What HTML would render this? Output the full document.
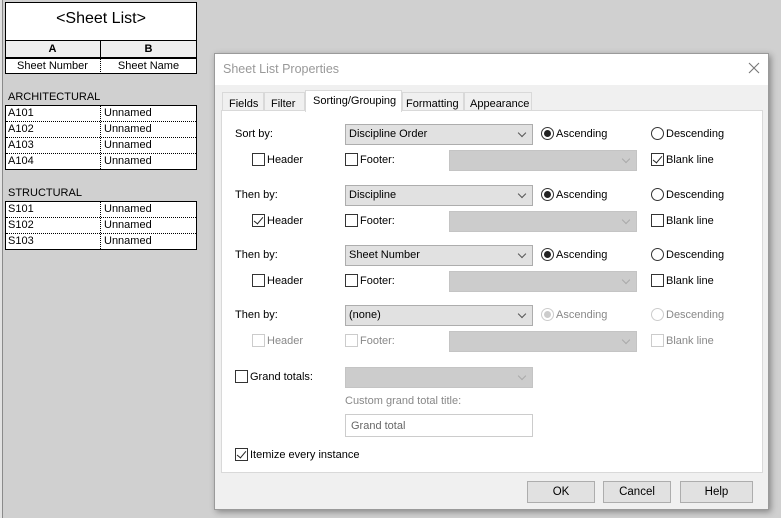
<!DOCTYPE html>
<html><head><style>
*{margin:0;padding:0;box-sizing:border-box}
body{width:781px;height:518px;background:#d0d0d0;position:relative;overflow:hidden;font-family:"Liberation Sans",sans-serif;font-size:12px;color:#000}
.a{position:absolute;white-space:nowrap}
.lb{position:absolute;left:0;top:0;width:3px;height:518px;background:#e2e2e2;border-right:1px solid #8a8a8a}
.tb{position:absolute;background:#fff;border:1px solid #000}
.cell{position:absolute;font-size:11px;line-height:15px}
.dlg{position:absolute;left:214px;top:53px;width:555px;height:457px;background:#f0f0f0;border:1px solid #9a9a9a;box-shadow:2px 2px 6px rgba(0,0,0,.35)}
.t{font-family:"Liberation Sans",sans-serif;font-size:11px;line-height:16px}
.sel{position:absolute;height:21px;background:#e1e1e1;border:1px solid #adadad;font-size:11px;line-height:19px;padding-left:3px}
.sel.d{background:#cccccc;border-color:#c4c4c4}
.sel:after{content:"";position:absolute;right:7px;top:5px;width:5px;height:5px;border-right:1px solid #555;border-bottom:1px solid #555;transform:rotate(45deg)}
.sel.d:after{border-color:#aaa}
.cb{position:absolute;width:13px;height:13px;border:1px solid #333;background:#fff}
.cb.dis{border-color:#ccc}
.cb.k:after{content:"";position:absolute;left:3px;top:0px;width:4px;height:8px;border-right:1.3px solid #222;border-bottom:1.3px solid #222;transform:rotate(40deg)}
.rd{position:absolute;width:13px;height:13px;border:1px solid #333;border-radius:50%;background:#fff}
.rd.on:after{content:"";position:absolute;left:2px;top:2px;width:7px;height:7px;border-radius:50%;background:#222}
.rd.dis{border-color:#ccc}
.rd.dis.on:after{background:#ccc}
.g{color:#888}
.btn{position:absolute;top:427px;height:22px;background:#e1e1e1;border:1px solid #adadad;text-align:center;line-height:20px;font-size:11.5px}
.tab{line-height:14px}
</style></head><body>
<div class="lb"></div>
<div class="tb" style="left:5px;top:2px;width:192px;height:39px;border-width:1px 1px 1px 1px"></div>
<div class="a" style="left:5px;top:10px;width:192px;text-align:center;font-size:16px">&lt;Sheet List&gt;</div>
<div class="a" style="left:5px;top:41px;width:192px;height:17px;background:#efefef;border:1px solid #000;border-top:none"></div>
<div class="a" style="left:100px;top:41px;width:1px;height:17px;background:#000"></div>
<div class="cell a" style="left:5px;top:42px;width:95px;text-align:center;font-weight:bold">A</div>
<div class="cell a" style="left:101px;top:42px;width:95px;text-align:center;font-weight:bold">B</div>
<div class="tb" style="left:5px;top:57px;width:192px;height:17px;border-width:2px 1px 1px 1px"></div>
<div class="a" style="left:100px;top:58px;height:16px;border-left:1px dotted #000"></div>
<div class="cell a" style="left:5px;top:59px;width:95px;text-align:center">Sheet Number</div>
<div class="cell a" style="left:101px;top:59px;width:95px;text-align:center">Sheet Name</div>
<div class="cell a" style="left:8px;top:90px">ARCHITECTURAL</div>
<div class="tb" style="left:5px;top:105px;width:192px;height:65px;border-width:1px"></div>
<div class="a" style="left:100px;top:106px;height:63px;border-left:1px dotted #000"></div>
<div class="a" style="left:6px;top:121px;width:190px;border-top:1px dotted #000"></div>
<div class="a" style="left:6px;top:137px;width:190px;border-top:1px dotted #000"></div>
<div class="a" style="left:6px;top:153px;width:190px;border-top:1px dotted #000"></div>
<div class="cell a" style="left:8px;top:106px">A101</div><div class="cell a" style="left:104px;top:106px">Unnamed</div>
<div class="cell a" style="left:8px;top:122px">A102</div><div class="cell a" style="left:104px;top:122px">Unnamed</div>
<div class="cell a" style="left:8px;top:138px">A103</div><div class="cell a" style="left:104px;top:138px">Unnamed</div>
<div class="cell a" style="left:8px;top:154px">A104</div><div class="cell a" style="left:104px;top:154px">Unnamed</div>
<div class="cell a" style="left:8px;top:186px">STRUCTURAL</div>
<div class="tb" style="left:5px;top:201px;width:192px;height:49px"></div>
<div class="a" style="left:100px;top:202px;height:47px;border-left:1px dotted #000"></div>
<div class="a" style="left:6px;top:217px;width:190px;border-top:1px dotted #000"></div>
<div class="a" style="left:6px;top:233px;width:190px;border-top:1px dotted #000"></div>
<div class="cell a" style="left:8px;top:202px">S101</div><div class="cell a" style="left:104px;top:202px">Unnamed</div>
<div class="cell a" style="left:8px;top:218px">S102</div><div class="cell a" style="left:104px;top:218px">Unnamed</div>
<div class="cell a" style="left:8px;top:234px">S103</div><div class="cell a" style="left:104px;top:234px">Unnamed</div>

<div class="dlg t">
 <div class="a" style="left:0;top:0;width:553px;height:31px;background:#fff"></div>
 <div class="a" style="left:8px;top:7px;font-size:12.5px;color:#999">Sheet List Properties</div>
 <svg class="a" style="left:533px;top:8px" width="12" height="12" viewBox="0 0 12 12"><path d="M1 1L11 11M11 1L1 11" stroke="#777" stroke-width="1.1"/></svg>
 <!-- tabs -->
 <div class="a" style="left:6px;top:56px;width:542px;height:363px;background:#fff;border:1px solid #d9d9d9"></div>
 <div class="a tab" style="left:7px;top:38px;width:42px;height:19px;background:#f0f0f0;border:1px solid #d9d9d9;padding:4px 0 0 6px">Fields</div>
 <div class="a tab" style="left:49px;top:38px;width:41px;height:19px;background:#f0f0f0;border:1px solid #d9d9d9;padding:4px 0 0 6px">Filter</div>
 <div class="a tab" style="left:90px;top:36px;width:97px;height:22px;background:#fff;border:1px solid #d9d9d9;border-bottom:none;padding:3px 0 0 7px">Sorting/Grouping</div>
 <div class="a tab" style="left:187px;top:38px;width:62px;height:19px;background:#f0f0f0;border:1px solid #d9d9d9;padding:4px 0 0 3px">Formatting</div>
 <div class="a tab" style="left:249px;top:38px;width:68px;height:19px;background:#f0f0f0;border:1px solid #d9d9d9;padding:4px 0 0 5px">Appearance</div>

 <div class="a" style="left:20px;top:72px">Sort by:</div>
 <div class="sel" style="left:130px;top:70px;width:188px">Discipline Order</div>
 <div class="rd on" style="left:326px;top:73px"></div><div class="a" style="left:341px;top:72px">Ascending</div>
 <div class="rd" style="left:436px;top:73px"></div><div class="a" style="left:451px;top:72px">Descending</div>
 <div class="cb" style="left:37px;top:99px"></div><div class="a" style="left:52px;top:98px">Header</div>
 <div class="cb" style="left:130px;top:99px"></div><div class="a" style="left:145px;top:98px">Footer:</div>
 <div class="sel d" style="left:234px;top:96px;width:188px"></div>
 <div class="cb k" style="left:436px;top:99px"></div><div class="a" style="left:451px;top:98px">Blank line</div>

 <div class="a" style="left:20px;top:133px">Then by:</div>
 <div class="sel" style="left:130px;top:131px;width:188px">Discipline</div>
 <div class="rd on" style="left:326px;top:134px"></div><div class="a" style="left:341px;top:133px">Ascending</div>
 <div class="rd" style="left:436px;top:134px"></div><div class="a" style="left:451px;top:133px">Descending</div>
 <div class="cb k" style="left:37px;top:160px"></div><div class="a" style="left:52px;top:159px">Header</div>
 <div class="cb" style="left:130px;top:160px"></div><div class="a" style="left:145px;top:159px">Footer:</div>
 <div class="sel d" style="left:234px;top:157px;width:188px"></div>
 <div class="cb" style="left:436px;top:160px"></div><div class="a" style="left:451px;top:159px">Blank line</div>

 <div class="a" style="left:20px;top:193px">Then by:</div>
 <div class="sel" style="left:130px;top:191px;width:188px">Sheet Number</div>
 <div class="rd on" style="left:326px;top:194px"></div><div class="a" style="left:341px;top:193px">Ascending</div>
 <div class="rd" style="left:436px;top:194px"></div><div class="a" style="left:451px;top:193px">Descending</div>
 <div class="cb" style="left:37px;top:220px"></div><div class="a" style="left:52px;top:219px">Header</div>
 <div class="cb" style="left:130px;top:220px"></div><div class="a" style="left:145px;top:219px">Footer:</div>
 <div class="sel d" style="left:234px;top:217px;width:188px"></div>
 <div class="cb" style="left:436px;top:220px"></div><div class="a" style="left:451px;top:219px">Blank line</div>

 <div class="a" style="left:20px;top:253px">Then by:</div>
 <div class="sel" style="left:130px;top:251px;width:188px">(none)</div>
 <div class="rd on dis" style="left:326px;top:254px"></div><div class="a g" style="left:341px;top:253px">Ascending</div>
 <div class="rd dis" style="left:436px;top:254px"></div><div class="a g" style="left:451px;top:253px">Descending</div>
 <div class="cb dis" style="left:37px;top:280px"></div><div class="a g" style="left:52px;top:279px">Header</div>
 <div class="cb dis" style="left:130px;top:280px"></div><div class="a g" style="left:145px;top:279px">Footer:</div>
 <div class="sel d" style="left:234px;top:277px;width:188px"></div>
 <div class="cb dis" style="left:436px;top:280px"></div><div class="a g" style="left:451px;top:279px">Blank line</div>

 <div class="cb" style="left:20px;top:316px"></div><div class="a" style="left:35px;top:315px">Grand totals:</div>
 <div class="sel d" style="left:130px;top:313px;width:188px"></div>
 <div class="a g" style="left:130px;top:339px">Custom grand total title:</div>
 <div class="a" style="left:130px;top:360px;width:188px;height:23px;border:1px solid #ccc;background:#fff;color:#666;padding:3px 0 0 5px">Grand total</div>
 <div class="cb k" style="left:20px;top:394px"></div><div class="a" style="left:35px;top:393px">Itemize every instance</div>

 <div class="btn" style="left:312px;width:68px">OK</div>
 <div class="btn" style="left:388px;width:68px">Cancel</div>
 <div class="btn" style="left:465px;width:73px">Help</div>
</div>
</body></html>
